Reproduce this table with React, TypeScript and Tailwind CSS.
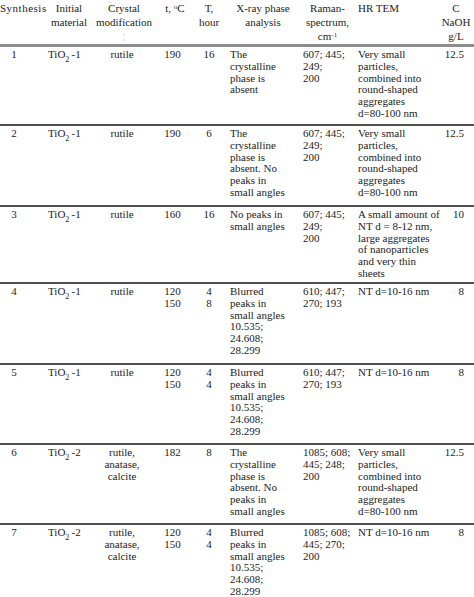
const cols = 'grid grid-cols-[44px_48px_66px_34px_34px_74px_55px_83px_36px]'

const ti = (n: string) => (
  <>
    TiO<sub className="text-[8px] align-[-2px]">2</sub>&thinsp;-{n}
  </>
)

type Row = {
  n: string
  mat: string
  cryst: string[]
  t: string[]
  h: string[]
  xray: string[]
  raman: string[]
  tem: string[]
  c: string
  hgt: string
}

const absent = ['The', 'crystalline', 'phase is', 'absent. No', 'peaks in', 'small angles']
const blurred = ['Blurred', 'peaks in', 'small angles', '10.535;', '24.608;', '28.299']
const verySmall = ['Very small', 'particles,', 'combined into', 'round-shaped', 'aggregates', 'd=80-100 nm']

const rows: Row[] = [
  { n: '1', mat: '1', cryst: ['rutile'], t: ['190'], h: ['16'], xray: ['The', 'crystalline', 'phase is', 'absent'], raman: ['607; 445;', '249;', '200'], tem: verySmall, c: '12.5', hgt: 'h-[77px]' },
  { n: '2', mat: '1', cryst: ['rutile'], t: ['190'], h: ['6'], xray: absent, raman: ['607; 445;', '249;', '200'], tem: verySmall, c: '12.5', hgt: 'h-[81px]' },
  { n: '3', mat: '1', cryst: ['rutile'], t: ['160'], h: ['16'], xray: ['No peaks in', 'small angles'], raman: ['607; 445;', '249;', '200'], tem: ['A small amount of', 'NT d = 8-12 nm,', 'large aggregates', 'of nanoparticles', 'and very thin', 'sheets'], c: '10', hgt: 'h-[77px]' },
  { n: '4', mat: '1', cryst: ['rutile'], t: ['120', '150'], h: ['4', '8'], xray: blurred, raman: ['610; 447;', '270; 193'], tem: ['NT d=10-16 nm'], c: '8', hgt: 'h-[81px]' },
  { n: '5', mat: '1', cryst: ['rutile'], t: ['120', '150'], h: ['4', '4'], xray: blurred, raman: ['610; 447;', '270; 193'], tem: ['NT d=10-16 nm'], c: '8', hgt: 'h-[80px]' },
  { n: '6', mat: '2', cryst: ['rutile,', 'anatase,', 'calcite'], t: ['182'], h: ['8'], xray: absent, raman: ['1085; 608;', '445; 248;', '200'], tem: verySmall, c: '12.5', hgt: 'h-[80px]' },
  { n: '7', mat: '2', cryst: ['rutile,', 'anatase,', 'calcite'], t: ['120', '150'], h: ['4', '4'], xray: blurred, raman: ['1085; 608;', '445; 270;', '200'], tem: ['NT d=10-16 nm'], c: '8', hgt: 'h-[74px]' },
]

const Lines = ({ items }: { items: string[] }) => (
  <>
    {items.map((s, i) => (
      <div key={i} className="whitespace-nowrap">
        {s}
      </div>
    ))}
  </>
)

export default function App() {
  return (
    <div
      className="w-[474px] h-[597px] overflow-hidden bg-white text-[#1c1c1c] text-[11px] leading-[11.8px]"
      style={{ fontFamily: '"Liberation Serif", "Times New Roman", serif' }}
    >
      {/* header */}
      <div className={`${cols} h-[47px] pt-[1px] leading-[14px] border-b-[3px] border-[#8c8c8c]`}>
        <div className="whitespace-nowrap tracking-[0.5px]">Synthesis</div>
        <div className="text-center pl-[2px]">
          <div>Initial</div>
          <div>material</div>
        </div>
        <div className="text-center pr-[2px]">
          <div>Crystal</div>
          <div>modification</div>
          <div className="text-[#b5b5b5] text-[9px]">¦</div>
        </div>
        <div className="text-center">
          t, <sup className="text-[7px]">o</sup>C
        </div>
        <div className="text-center">
          <div>T,</div>
          <div>hour</div>
        </div>
        <div className="text-center whitespace-nowrap">
          <div>X-ray phase</div>
          <div>analysis</div>
        </div>
        <div className="text-center whitespace-nowrap">
          <div>Raman-</div>
          <div>spectrum,</div>
          <div>
            cm<sup className="text-[7px]">-1</sup>
          </div>
        </div>
        <div className="pl-[3px] whitespace-nowrap">HR TEM</div>
        <div className="text-center whitespace-nowrap">
          <div>C</div>
          <div>NaOH</div>
          <div>g/L</div>
        </div>
      </div>

      {rows.map((r, i) => (
        <div
          key={r.n}
          className={`${cols} ${r.hgt} pt-[2px] ${i > 0 ? 'border-t-2 border-[#505050]' : ''}`}
        >
          <div className="w-[28px] text-center">{r.n}</div>
          <div className="pl-[4px] whitespace-nowrap">{ti(r.mat)}</div>
          <div className="text-center pr-[6px]">
            <Lines items={r.cryst} />
          </div>
          <div className="text-center pr-[5px]">
            <Lines items={r.t} />
          </div>
          <div className="text-center">
            <Lines items={r.h} />
          </div>
          <div className="pl-[4px]">
            <Lines items={r.xray} />
          </div>
          <div className="pl-[3px]">
            <Lines items={r.raman} />
          </div>
          <div className="pl-[3px]">
            <Lines items={r.tem} />
          </div>
          <div className="text-right pr-[10px]">{r.c}</div>
        </div>
      ))}
    </div>
  )
}
